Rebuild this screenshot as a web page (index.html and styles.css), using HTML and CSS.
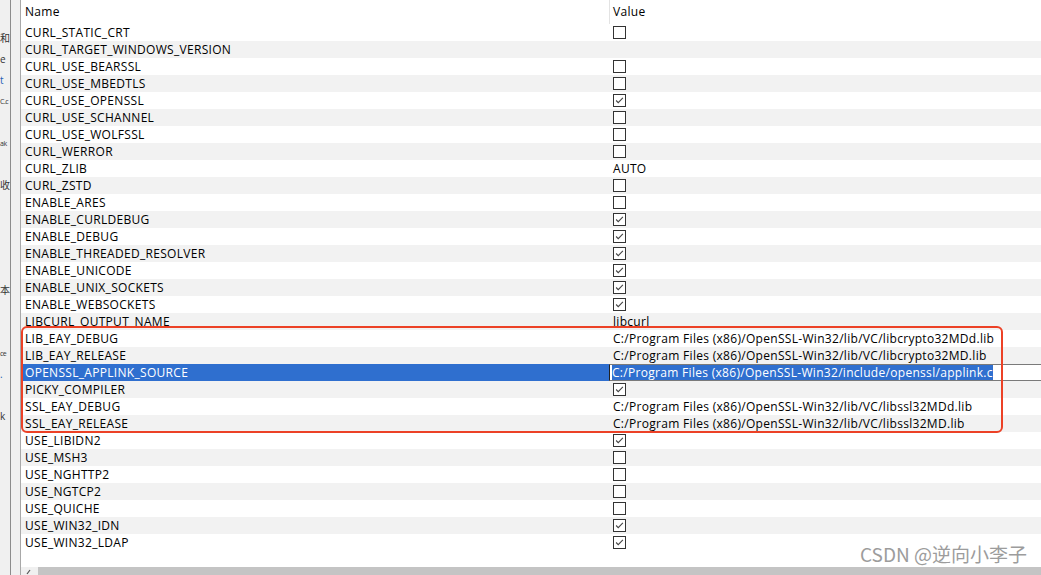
FILE: index.html
```html
<!DOCTYPE html>
<html lang="en">
<head>
  <meta charset="UTF-8">
  <title>CMake Cache Entries</title>
  <meta name="viewport" content="width=device-width, initial-scale=1.0">
  <link rel="stylesheet" href="styles.css">
</head>
<body>

  <div class="window">
    <aside class="side">
      <div class="frag">和</div>
      <div class="frag">e</div>
      <div class="frag link">t</div>
      <div class="frag small">C.c</div>
      <div class="frag"></div>
      <div class="frag small">ak</div>
      <div class="frag"></div>
      <div class="frag">收</div>
      <div class="frag"></div>
      <div class="frag"></div>
      <div class="frag"></div>
      <div class="frag"></div>
      <div class="frag">本</div>
      <div class="frag"></div>
      <div class="frag"></div>
      <div class="frag small">ce</div>
      <div class="frag link">.</div>
      <div class="frag"></div>
      <div class="frag">k</div>
    </aside>

    <div class="gutter"></div>

    <section class="cache">
      <div class="head">
        <div class="name">Name</div>
        <div class="value">Value</div>
      </div>

      <div class="rows">
        <div class="row"><div class="name">CURL_STATIC_CRT</div><div class="value"><span class="cb"></span></div></div>
        <div class="row"><div class="name">CURL_TARGET_WINDOWS_VERSION</div><div class="value"></div></div>
        <div class="row"><div class="name">CURL_USE_BEARSSL</div><div class="value"><span class="cb"></span></div></div>
        <div class="row"><div class="name">CURL_USE_MBEDTLS</div><div class="value"><span class="cb"></span></div></div>
        <div class="row"><div class="name">CURL_USE_OPENSSL</div><div class="value"><span class="cb on"><svg viewBox="0 0 13 13"><path d="M2.5 6.5 L5 9 L10.5 3.5"/></svg></span></div></div>
        <div class="row"><div class="name">CURL_USE_SCHANNEL</div><div class="value"><span class="cb"></span></div></div>
        <div class="row"><div class="name">CURL_USE_WOLFSSL</div><div class="value"><span class="cb"></span></div></div>
        <div class="row"><div class="name">CURL_WERROR</div><div class="value"><span class="cb"></span></div></div>
        <div class="row"><div class="name">CURL_ZLIB</div><div class="value">AUTO</div></div>
        <div class="row"><div class="name">CURL_ZSTD</div><div class="value"><span class="cb"></span></div></div>
        <div class="row"><div class="name">ENABLE_ARES</div><div class="value"><span class="cb"></span></div></div>
        <div class="row"><div class="name">ENABLE_CURLDEBUG</div><div class="value"><span class="cb on"><svg viewBox="0 0 13 13"><path d="M2.5 6.5 L5 9 L10.5 3.5"/></svg></span></div></div>
        <div class="row"><div class="name">ENABLE_DEBUG</div><div class="value"><span class="cb on"><svg viewBox="0 0 13 13"><path d="M2.5 6.5 L5 9 L10.5 3.5"/></svg></span></div></div>
        <div class="row"><div class="name">ENABLE_THREADED_RESOLVER</div><div class="value"><span class="cb on"><svg viewBox="0 0 13 13"><path d="M2.5 6.5 L5 9 L10.5 3.5"/></svg></span></div></div>
        <div class="row"><div class="name">ENABLE_UNICODE</div><div class="value"><span class="cb on"><svg viewBox="0 0 13 13"><path d="M2.5 6.5 L5 9 L10.5 3.5"/></svg></span></div></div>
        <div class="row"><div class="name">ENABLE_UNIX_SOCKETS</div><div class="value"><span class="cb on"><svg viewBox="0 0 13 13"><path d="M2.5 6.5 L5 9 L10.5 3.5"/></svg></span></div></div>
        <div class="row"><div class="name">ENABLE_WEBSOCKETS</div><div class="value"><span class="cb on"><svg viewBox="0 0 13 13"><path d="M2.5 6.5 L5 9 L10.5 3.5"/></svg></span></div></div>
        <div class="row"><div class="name">LIBCURL_OUTPUT_NAME</div><div class="value">libcurl</div></div>
        <div class="row"><div class="name">LIB_EAY_DEBUG</div><div class="value">C:/Program Files (x86)/OpenSSL-Win32/lib/VC/libcrypto32MDd.lib</div></div>
        <div class="row"><div class="name">LIB_EAY_RELEASE</div><div class="value">C:/Program Files (x86)/OpenSSL-Win32/lib/VC/libcrypto32MD.lib</div></div>
        <div class="row selected"><div class="name">OPENSSL_APPLINK_SOURCE</div><div class="value editor"><span class="sel">C:/Program Files (x86)/OpenSSL-Win32/include/openssl/applink.c</span></div></div>
        <div class="row"><div class="name">PICKY_COMPILER</div><div class="value"><span class="cb on"><svg viewBox="0 0 13 13"><path d="M2.5 6.5 L5 9 L10.5 3.5"/></svg></span></div></div>
        <div class="row"><div class="name">SSL_EAY_DEBUG</div><div class="value">C:/Program Files (x86)/OpenSSL-Win32/lib/VC/libssl32MDd.lib</div></div>
        <div class="row"><div class="name">SSL_EAY_RELEASE</div><div class="value">C:/Program Files (x86)/OpenSSL-Win32/lib/VC/libssl32MD.lib</div></div>
        <div class="row"><div class="name">USE_LIBIDN2</div><div class="value"><span class="cb on"><svg viewBox="0 0 13 13"><path d="M2.5 6.5 L5 9 L10.5 3.5"/></svg></span></div></div>
        <div class="row"><div class="name">USE_MSH3</div><div class="value"><span class="cb"></span></div></div>
        <div class="row"><div class="name">USE_NGHTTP2</div><div class="value"><span class="cb"></span></div></div>
        <div class="row"><div class="name">USE_NGTCP2</div><div class="value"><span class="cb"></span></div></div>
        <div class="row"><div class="name">USE_QUICHE</div><div class="value"><span class="cb"></span></div></div>
        <div class="row"><div class="name">USE_WIN32_IDN</div><div class="value"><span class="cb on"><svg viewBox="0 0 13 13"><path d="M2.5 6.5 L5 9 L10.5 3.5"/></svg></span></div></div>
        <div class="row"><div class="name">USE_WIN32_LDAP</div><div class="value"><span class="cb on"><svg viewBox="0 0 13 13"><path d="M2.5 6.5 L5 9 L10.5 3.5"/></svg></span></div></div>
      </div>

      <div class="fill"></div>

      <div class="hscroll">
        <span class="arrow"><svg viewBox="0 0 17 8"><path d="M9 3 L6 7"/></svg></span>
        <span class="thumb"></span>
      </div>

      <!-- annotation drawn over the list -->
      <div class="mark"></div>
      <div class="watermark">CSDN @逆向小李子</div>
    </section>
  </div>

</body>
</html>
```

FILE: styles.css
```css
:root {
  --row-alt: #f2f2f2;
  --select: #2f6fcf;
  --panel: #f0f0f0;
  --mark: #ec4126;
}

html, body {
  margin: 0;
  height: 100%;
  overflow: hidden;
}

body {
  font-family: "Open Sans", "Noto Sans CJK SC", sans-serif;
  font-size: 12px;
  color: #000;
  background: white;
}

.window {
  display: flex;
  height: 575px;
}

.side {
  width: 10px;
  flex: none;
  background: var(--panel);
  border-right: 1px solid #8c8c8c;
  padding-top: 28px;
  overflow: hidden;
}

.frag {
  height: 21px;
  line-height: 21px;
  font-size: 10px;
  letter-spacing: -0.5px;
  white-space: nowrap;
  color: #333;
}

.frag.small {
  font-size: 7px;
}

.frag.link {
  color: #1f5fb5;
}

.gutter {
  width: 9px;
  flex: none;
  background: var(--panel);
  border-right: 1px solid #a8a8a8;
}

.cache {
  position: relative;
  flex: 1;
  display: flex;
  flex-direction: column;
  background: white;
  overflow: hidden;
  letter-spacing: 0.3px;
}

.head,
.row {
  display: grid;
  grid-template-columns: 588px 1fr;
}

.head {
  height: 24px;
  line-height: 24px;
}

.head .value {
  border-left: 1px solid #e3e3e3;
}

.name {
  padding-left: 4px;
  white-space: nowrap;
}

.value {
  padding-left: 3px;
  white-space: nowrap;
  display: flex;
  align-items: center;
}

.row {
  height: 17px;
  line-height: 17px;
}

.row:nth-child(even) {
  background: var(--row-alt);
}

.row .value {
  padding-left: 4px;
}

.row.selected {
  background: white;
}

.row.selected .name {
  background: var(--select);
  color: white;
}

.value.editor {
  box-sizing: border-box;
  padding-left: 2px;
  border: 1px solid #7a7a7a;
  border-left: 1px solid #222;
  border-right: none;
  background: white;
}

.sel {
  background: var(--select);
  color: white;
  line-height: 15px;
}

.cb {
  box-sizing: border-box;
  width: 13px;
  height: 13px;
  border: 1px solid #333;
  background: white;
  display: inline-block;
}

.cb svg {
  display: block;
  width: 11px;
  height: 11px;
  fill: none;
  stroke: #444;
  stroke-width: 1.3;
}

.fill {
  flex: 1;
}

.hscroll {
  height: 8px;
  display: flex;
  flex: none;
}

.arrow {
  width: 17px;
  background: var(--panel);
}

.arrow svg {
  display: block;
  width: 17px;
  height: 8px;
  fill: none;
  stroke: #555;
  stroke-width: 1.2;
}

.thumb {
  flex: 1;
  background: #c4c4c4;
}

.mark {
  position: absolute;
  left: 0;
  top: 326px;
  width: 982px;
  height: 107px;
  box-sizing: border-box;
  border: 2.5px solid var(--mark);
  border-radius: 6px;
}

.watermark {
  position: absolute;
  right: 14px;
  bottom: 8px;
  font-family: "Noto Sans CJK SC", sans-serif;
  font-size: 19px;
  letter-spacing: 0;
  color: #9c9c9c;
  text-shadow: 0 0 2px white, 0 0 2px white;
}
```
